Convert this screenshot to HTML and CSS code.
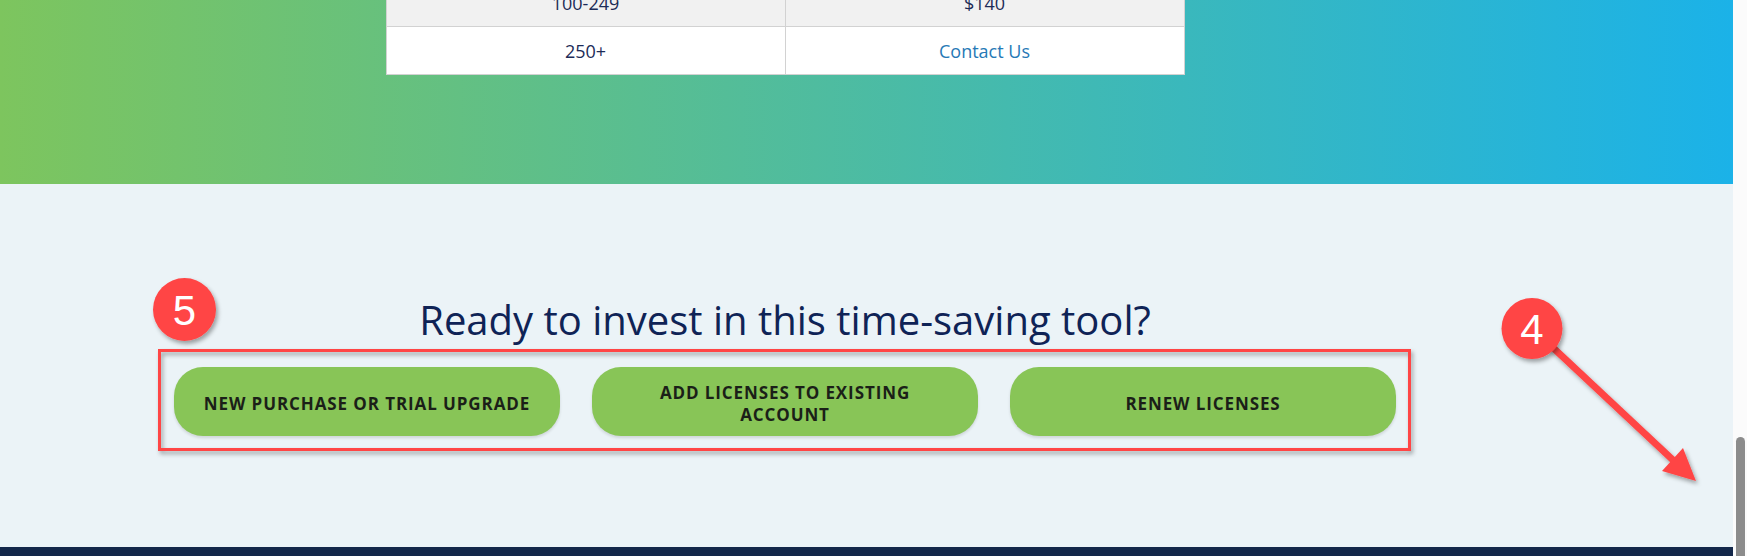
FILE: index.html
```html
<!DOCTYPE html>
<html lang="en">
<head>
<meta charset="utf-8">
<title>Pricing</title>
<link rel="stylesheet" href="styles.css">
</head>
<body>
<div class="page">
  <div class="main">
    <section class="pricing">
      <div class="wrap">
        <table class="price-table">
          <tr class="shaded"><td>100-249</td><td>$140</td></tr>
          <tr><td>250+</td><td><a href="#" class="link">Contact Us</a></td></tr>
        </table>
      </div>
    </section>
    <section class="cta">
      <div class="wrap">
        <h2 class="cta-title">Ready to invest in this time-saving tool?</h2>
        <div class="buttons">
          <a href="#" class="btn">NEW PURCHASE OR TRIAL UPGRADE</a>
          <a href="#" class="btn">ADD LICENSES TO EXISTING ACCOUNT</a>
          <a href="#" class="btn">RENEW LICENSES</a>
        </div>
      </div>
    </section>
    <footer class="footer"></footer>
  </div>
  <div class="scrollbar"><div class="thumb"></div></div>

  <svg class="annotations" width="1747" height="556" viewBox="0 0 1747 556" xmlns="http://www.w3.org/2000/svg">
    <defs>
      <filter id="sh" x="-20%" y="-20%" width="140%" height="140%">
        <feDropShadow dx="2" dy="3" stdDeviation="2" flood-color="#000" flood-opacity="0.35"/>
      </filter>
    </defs>
    <rect x="159.5" y="350.5" width="1250" height="99" fill="none" stroke="#ff4545" stroke-width="3" filter="url(#sh)"/>
    <g filter="url(#sh)">
      <line x1="1532" y1="328" x2="1674" y2="461" stroke="#ff4545" stroke-width="7"/>
      <polygon points="1662,471 1683,448 1696,481" fill="#ff4545"/>
    </g>
    <g filter="url(#sh)">
      <circle cx="184.5" cy="309.5" r="31.5" fill="#ff4545"/>
      <circle cx="1532" cy="328.5" r="30.5" fill="#ff4545"/>
    </g>
    <text x="184.5" y="324.5" class="badge-num">5</text>
    <text x="1532" y="343.5" class="badge-num">4</text>
  </svg>
</div>
</body>
</html>
```

FILE: styles.css
```css
html, body {
  margin: 0;
  padding: 0;
  overflow: hidden;
}

body {
  font-family: "Open Sans", "Noto Sans", sans-serif;
  width: 1747px;
  height: 556px;
}

.page {
  position: relative;
  display: flex;
  width: 1747px;
  height: 556px;
}

.main {
  flex: 1;
  display: flex;
  flex-direction: column;
  min-width: 0;
}

.wrap {
  width: 1570px;
}

.pricing {
  height: 184px;
  overflow: hidden;
  background: linear-gradient(90deg, #7dc55e 0%, #1bb2e8 100%);
  flex-shrink: 0;
}

.price-table {
  width: 799px;
  margin: -22px auto 0;
  border-collapse: collapse;
  background: #fff;
  table-layout: fixed;
}

.price-table td {
  height: 47px;
  padding: 0;
  text-align: center;
  border: 1px solid #d2d2d2;
  color: #1c2b57;
  font-size: 18px;
}

.price-table tr.shaded td {
  background: #f1f1f1;
}

.link {
  color: #2679b6;
  text-decoration: none;
}

.cta {
  background: #ebf3f7;
  padding: 113px 0 111px;
  flex-shrink: 0;
}

.cta-title {
  margin: 0;
  text-align: center;
  font-weight: 400;
  font-size: 40px;
  line-height: 46px;
  color: #0f2356;
}

.buttons {
  display: flex;
  justify-content: center;
  gap: 32px;
  margin-top: 24px;
}

.btn {
  width: 386px;
  height: 69px;
  box-sizing: border-box;
  padding: 4px 22px 0;
  display: flex;
  align-items: center;
  justify-content: center;
  text-align: center;
  background: #88c557;
  border-radius: 29px;
  color: #1b1f18;
  font-weight: 700;
  font-size: 17px;
  line-height: 22px;
  letter-spacing: 0.9px;
  text-decoration: none;
  box-shadow: 0 2px 3px rgba(0, 0, 0, 0.12);
}

.footer {
  flex: 1;
  background: #13274a;
}

.scrollbar {
  width: 14px;
  flex-shrink: 0;
  background: #fbfbfb;
  position: relative;
}

.thumb {
  position: absolute;
  left: 3px;
  top: 437px;
  width: 9px;
  height: 140px;
  border-radius: 5px;
  background: #8c8c8c;
}

.annotations {
  position: absolute;
  left: 0;
  top: 0;
  pointer-events: none;
}

.badge-num {
  fill: #fff;
  font-family: "Liberation Sans", Arial, sans-serif;
  font-size: 42px;
  text-anchor: middle;
}
```
